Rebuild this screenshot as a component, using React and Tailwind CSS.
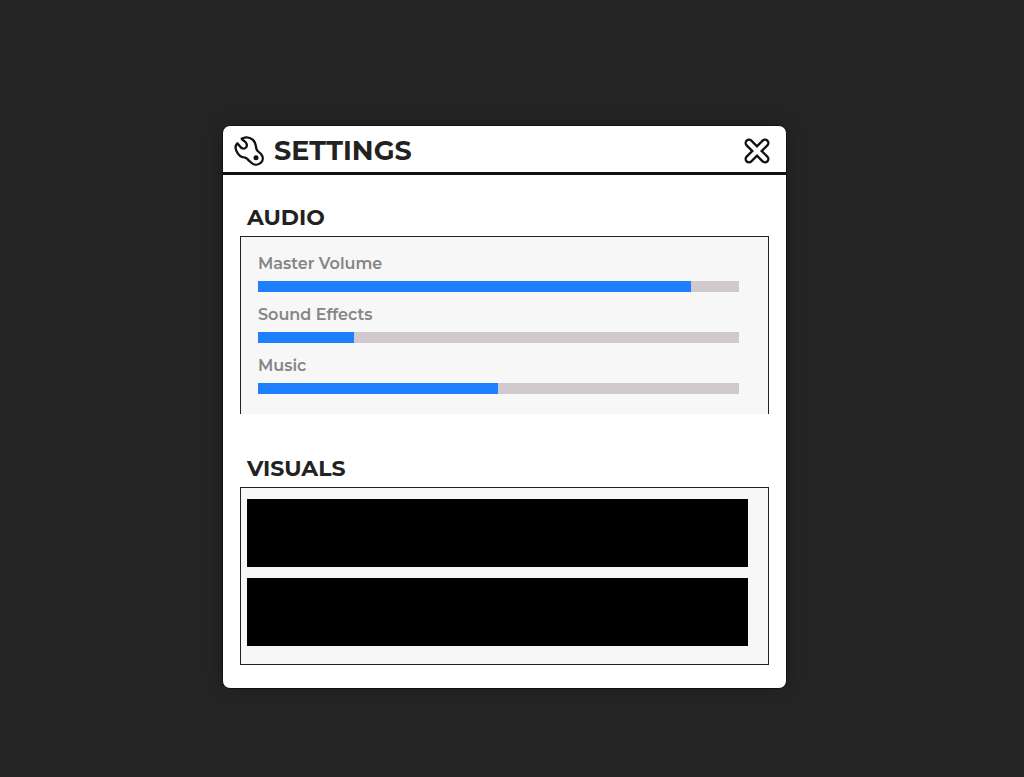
import { useState } from "react";

function WrenchIcon() {
  return (
    <svg viewBox="0 0 90 90" className="w-[30px] h-[30px] shrink-0" fill="none" aria-hidden="true">
      <path
        d="M10 22C4 28 4 37 7 44C12 57 20 64 33 65C38 66 40 69 44 73L53 81C61 88 73 87 81 80C88 73 88 62 81 54L71 45C66 41 67 37 66 31C64 14 51 3 36 4C30 5 26 6 23 8C26 14 36 16 38 24C40 32 35 38 28 38C19 38 17 28 10 22Z"
        stroke="#111"
        strokeWidth="7"
        strokeLinejoin="round"
      />
      <circle cx="66" cy="65" r="7.5" fill="#111" />
    </svg>
  );
}

function CloseIcon() {
  return (
    <svg viewBox="0 0 78 78" className="w-[26px] h-[26px]" fill="none" strokeLinecap="round" aria-hidden="true">
      <path d="M15 15L63 63M63 15L15 63" stroke="#111" strokeWidth="27" />
      <path d="M15 15L63 63M63 15L15 63" stroke="#fff" strokeWidth="13" />
    </svg>
  );
}

function VolumeSlider({ id, label, value, onChange }) {
  return (
    <div>
      <label htmlFor={id} className="block mb-[5px] text-base leading-6 font-semibold text-[#858585]">
        {label}
      </label>
      <input
        id={id}
        type="range"
        min="0"
        max="100"
        value={value}
        onChange={(e) => onChange(Number(e.target.value))}
        className="block w-full h-[11px] appearance-none cursor-pointer [&::-webkit-slider-thumb]:appearance-none [&::-webkit-slider-thumb]:w-0"
        style={{ background: `linear-gradient(to right, #1f80ff ${value}%, #d0cace ${value}%)` }}
      />
    </div>
  );
}

export default function App() {
  const [open, setOpen] = useState(true);
  const [volumes, setVolumes] = useState({ master: 90, effects: 20, music: 50 });

  const sliders = [
    { id: "master", label: "Master Volume" },
    { id: "effects", label: "Sound Effects" },
    { id: "music", label: "Music" },
  ];

  return (
    <div className="min-h-screen bg-[#252525] pt-[125px] pb-20 pr-[15px] font-['Montserrat','Inter',sans-serif] text-[#222]">
      {open && (
        <div
          role="dialog"
          aria-labelledby="settings-title"
          className="w-full max-w-[565px] mx-auto bg-white border border-[#111] rounded-lg shadow-[0_0_20px_rgba(0,0,0,0.25)]"
        >
          {/* Title bar */}
          <header className="flex items-center gap-2.5 h-[49px] pt-1 pl-[11px] pr-4 border-b-3 border-[#111]">
            <WrenchIcon />
            <h1 id="settings-title" className="grow text-[27px] leading-8 font-bold">SETTINGS</h1>
            <button type="button" aria-label="Close" onClick={() => setOpen(false)} className="cursor-pointer">
              <CloseIcon />
            </button>
          </header>

          <div className="flex flex-col gap-[39px] px-[17px] pt-[27px] pb-[23px]">
            {/* Audio */}
            <section>
              <h2 className="mb-0.5 pl-[7px] text-[22px] leading-8 font-bold">AUDIO</h2>
              <div className="flex flex-col gap-[11px] pt-[15px] pb-5 pl-[17px] pr-[29px] bg-[#f7f7f7] border border-b-0 border-[#222]">
                {sliders.map((s) => (
                  <VolumeSlider
                    key={s.id}
                    id={s.id}
                    label={s.label}
                    value={volumes[s.id]}
                    onChange={(value) => setVolumes({ ...volumes, [s.id]: value })}
                  />
                ))}
              </div>
            </section>

            {/* Visuals */}
            <section>
              <h2 className="mb-0.5 pl-[7px] text-[22px] leading-8 font-bold">VISUALS</h2>
              <div className="flex flex-col gap-[11px] pt-[11px] pb-[18px] pl-1.5 pr-5 bg-[#f7f7f7] border border-[#222]">
                <div className="h-[68px] bg-black" />
                <div className="h-[68px] bg-black" />
              </div>
            </section>
          </div>
        </div>
      )}
    </div>
  );
}
